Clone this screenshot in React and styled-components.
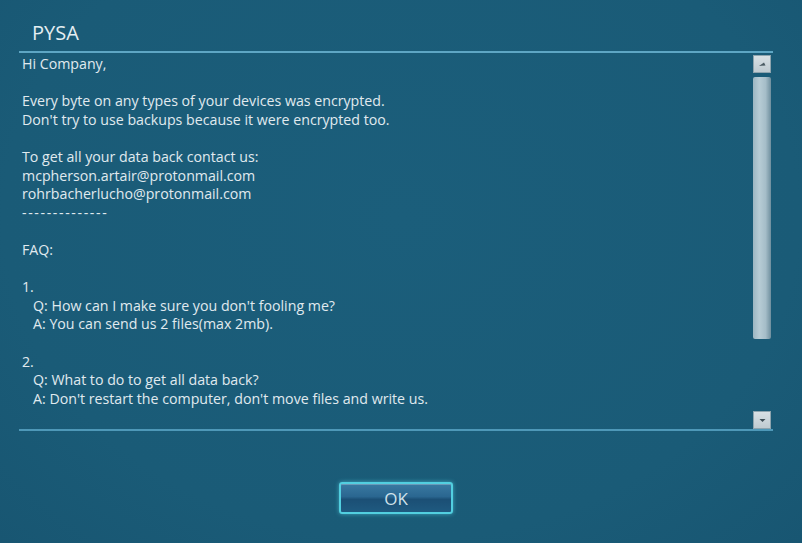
import styled, { createGlobalStyle } from "styled-components";

const GlobalStyle = createGlobalStyle`
  html, body {
    margin: 0;
    padding: 0;
    background: #1a5c79;
  }
  body {
    font-family: "Open Sans", "Noto Sans", "DejaVu Sans", sans-serif;
  }
`;

const lines = [
  { text: "Hi Company," },
  { text: "" },
  { text: "Every byte on any types of your devices was encrypted." },
  { text: "Don't try to use backups because it were encrypted too." },
  { text: "" },
  { text: "To get all your data back contact us:" },
  { text: "mcpherson.artair@protonmail.com" },
  { text: "rohrbacherlucho@protonmail.com" },
  { text: "--------------", spaced: true },
  { text: "" },
  { text: "FAQ:" },
  { text: "" },
  { text: "1." },
  { text: "Q: How can I make sure you don't fooling me?", indent: true },
  { text: "A: You can send us 2 files(max 2mb).", indent: true },
  { text: "" },
  { text: "2." },
  { text: "Q: What to do to get all data back?", indent: true },
  { text: "A: Don't restart the computer, don't move files and write us.", indent: true },
];

const App = () => {
  return (
    <>
      <GlobalStyle />
      <Window>
        <Title>PYSA</Title>
        <Panel>
          <TextArea>
            {lines.map((line, i) => (
              <Line key={i} $indent={line.indent} $spaced={line.spaced}>
                {line.text || "\u00a0"}
              </Line>
            ))}
          </TextArea>
          <ScrollBar>
            <ScrollButton>
              <svg width="9" height="7" viewBox="0 0 9 7">
                <path d="M1 5 L6 1.5 L7.5 4.5 Z" fill="#4a5a62" />
              </svg>
            </ScrollButton>
            <Track>
              <Thumb />
            </Track>
            <ScrollButton>
              <svg width="9" height="7" viewBox="0 0 9 7">
                <path d="M1.5 2 L7.5 2 L4.5 5 Z" fill="#3e4e56" />
              </svg>
            </ScrollButton>
          </ScrollBar>
        </Panel>
        <Footer>
          <OkButton>OK</OkButton>
        </Footer>
      </Window>
    </>
  );
};

const Window = styled.div`
  width: 802px;
  height: 543px;
  box-sizing: border-box;
  display: flex;
  flex-direction: column;
  background: radial-gradient(ellipse at 50% 40%, #1b5e7b 0%, #1a5b77 70%, #185672 100%);
  overflow: hidden;
`;

const Title = styled.div`
  height: 51px;
  box-sizing: border-box;
  padding: 20px 0 0 32px;
  color: #e4eef2;
  font-size: 20px;
  line-height: 26px;
  font-weight: 400;
`;

const Panel = styled.div`
  margin: 0 29px 0 19px;
  height: 380px;
  box-sizing: border-box;
  border-top: 2px solid #5ea6c4;
  border-bottom: 2px solid #4e98b8;
  display: flex;
`;

const TextArea = styled.div`
  flex: 1;
  padding: 2px 0 0 3px;
  color: #e0eaef;
  font-size: 14.2px;
  line-height: 18.6px;
  overflow: hidden;
`;

const Line = styled.div`
  white-space: pre;
  padding-left: ${({ $indent }) => ($indent ? "11px" : "0")};
  letter-spacing: ${({ $spaced }) => ($spaced ? "1.6px" : "normal")};
`;

const ScrollBar = styled.div`
  width: 18px;
  margin-right: 2px;
  display: flex;
  flex-direction: column;
  padding: 2px 0 0;
  gap: 4px;
`;

const ScrollButton = styled.div`
  height: 18px;
  background: linear-gradient(180deg, #d8e0e4 0%, #bfcbd1 100%);
  border: 1px solid #8ea4ae;
  box-sizing: border-box;
  display: flex;
  align-items: center;
  justify-content: center;
`;

const Track = styled.div`
  flex: 1;
  display: flex;
  flex-direction: column;
  padding-bottom: 68px;
`;

const Thumb = styled.div`
  flex: 1;
  background: linear-gradient(90deg, #9cb6c2 0%, #b7ccd5 35%, #a5bdc8 70%, #6f8f9e 100%);
  border-radius: 2px;
`;

const Footer = styled.div`
  margin: 51px 29px 0 19px;
  display: flex;
  justify-content: center;
`;

const OkButton = styled.button`
  width: 114px;
  height: 32px;
  box-sizing: border-box;
  border: 2px solid #52cfe0;
  border-radius: 3px;
  background: linear-gradient(180deg, #3a7aa2 0%, #2a6690 45%, #1b4f75 55%, #1f5a80 100%);
  box-shadow: 0 0 4px rgba(90, 220, 235, 0.6), inset 0 1px 0 rgba(255, 255, 255, 0.25);
  color: #cfe1ea;
  font-family: "Open Sans", "Noto Sans", sans-serif;
  font-size: 17px;
  padding: 0;
  cursor: pointer;
`;

export default App;
